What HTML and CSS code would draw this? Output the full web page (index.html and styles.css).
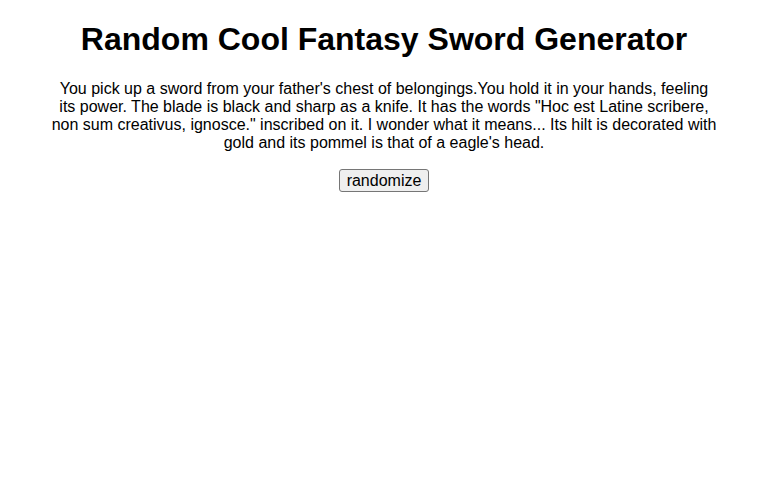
FILE: index.html
```html
<!DOCTYPE html>
<html lang="en">
<head>
    <meta charset="UTF-8">
    <meta name="viewport" content="width=device-width, initial-scale=1.0">
    <title>Random Cool Fantasy Sword Generator</title>
    <link rel="stylesheet" href="styles.css">
</head>
<body>
    <div class="page">
        <h1 class="title">Random Cool Fantasy Sword Generator</h1>
        <p class="story" id="story">You pick up a sword from your father's chest of belongings.You hold it in your hands, feeling its power. The blade is black and sharp as a knife. It has the words "Hoc est Latine scribere, non sum creativus, ignosce." inscribed on it. I wonder what it means... Its hilt is decorated with gold and its pommel is that of a eagle's head.</p>
        <button class="randomize" id="randomize">randomize</button>
    </div>
</body>
</html>
```

FILE: styles.css
```css
body {
    margin: 0;
    background-color: #fff;
    color: #000;
    font-family: "Liberation Sans", Arial, sans-serif;
}

.page {
    text-align: center;
    padding: 0 50px;
}

.title {
    font-size: 32px;
    font-weight: bold;
    margin: 21px 0;
}

.story {
    font-size: 16px;
    margin: 22px 0 17px;
}

.randomize {
    font-family: "Liberation Sans", Arial, sans-serif;
    font-size: 16px;
    color: #000;
    background-color: #efefef;
    border: 1px solid #767676;
    border-radius: 3px;
    height: 23px;
    padding: 0 7px;
}
```
